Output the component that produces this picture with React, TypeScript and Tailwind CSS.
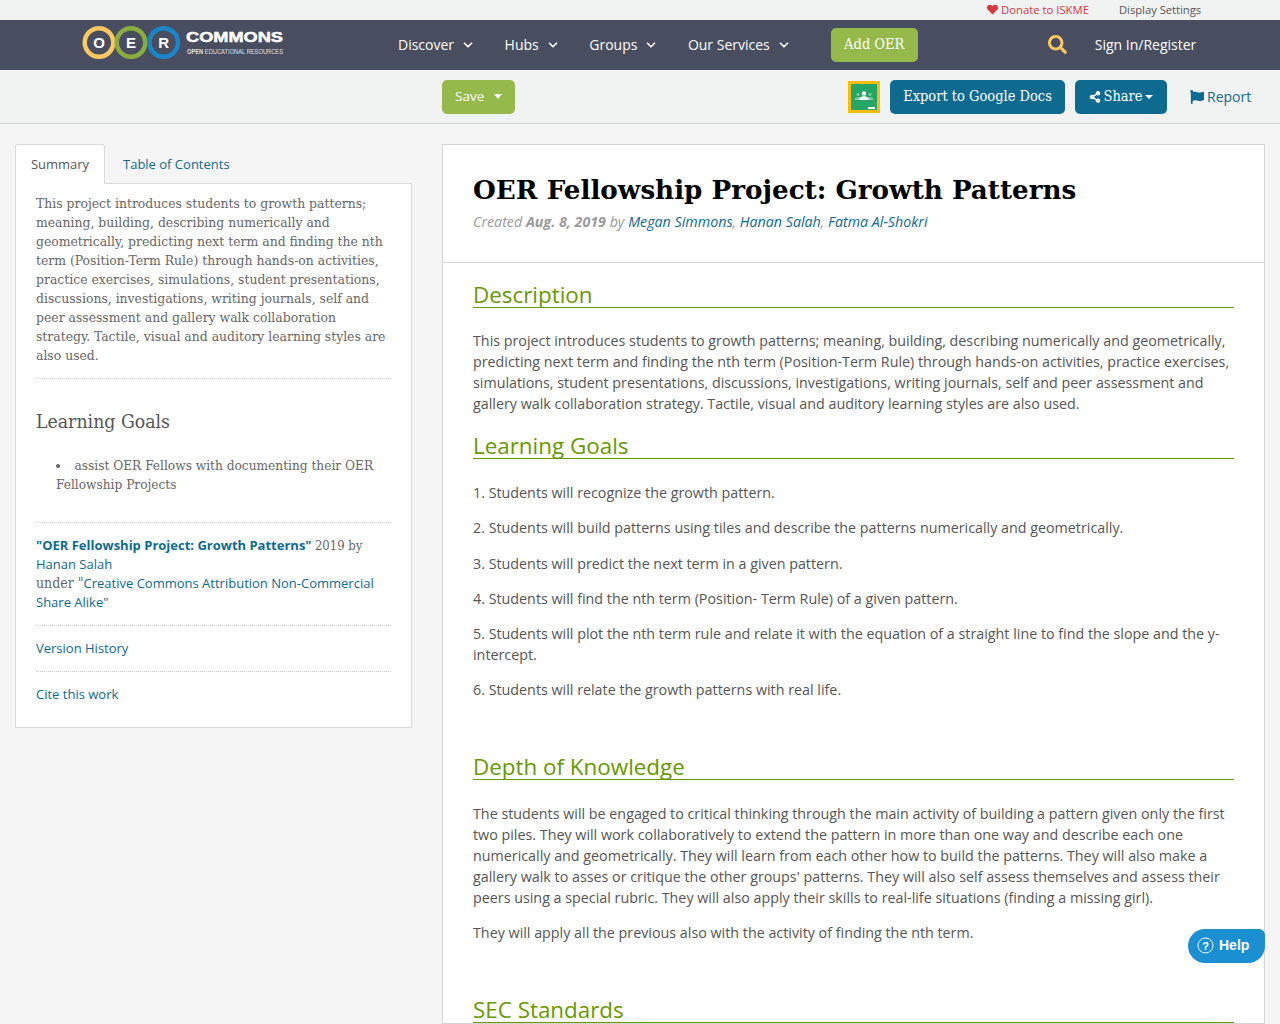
import { ChevronDown } from "lucide-react";
import { FaFlag, FaHeart, FaSearch, FaShareAlt } from "react-icons/fa";

const openSans = "font-['Open_Sans',sans-serif]";
const slab = "font-['DejaVu_Serif_Condensed','DejaVu_Serif',serif]";

const NavItem = ({ label }: { label: string }) => (
  <div className="flex items-center gap-[7px]">
    <span>{label}</span>
    <ChevronDown size={14} strokeWidth={3} />
  </div>
);

const SectionTitle = ({ children }: { children: string }) => (
  <h2 className="text-[22.4px] leading-[24px] text-[#669900] border-b border-[#669900] h-[25px]">
    {children}
  </h2>
);

const Logo = () => (
  <svg width="220" height="38" viewBox="0 0 220 38" className="block">
    <circle cx="18" cy="16.500" r="14.250" fill="#484e60" stroke="#fcc85f" strokeWidth="4.500" />
    <circle cx="50" cy="16.500" r="14.250" fill="#484e60" stroke="#8aad3e" strokeWidth="4.500" />
    <circle cx="82.700" cy="16.500" r="14.250" fill="#484e60" stroke="#1a85c8" strokeWidth="4.500" />
    <g fill="#fff" fontFamily="Liberation Sans" fontWeight="700" textAnchor="middle" fontSize="15">
      <text x="18" y="22">O</text>
      <text x="50" y="22">E</text>
      <text x="82.700" y="22">R</text>
    </g>
    <text x="105" y="16.300" fill="#fff" stroke="#fff" strokeWidth="0.500" fontFamily="Liberation Sans" fontWeight="700" fontSize="15.500" textLength="97" lengthAdjust="spacingAndGlyphs">COMMONS</text>
    <text x="106" y="27.500" fill="#dfe2e6" fontFamily="Liberation Sans" fontSize="6.500" textLength="96" lengthAdjust="spacingAndGlyphs">
      <tspan fontWeight="700">OPEN</tspan> EDUCATIONAL RESOURCES
    </text>
  </svg>
);

const ClassroomIcon = () => (
  <div className="w-8 h-8 border-[3px] border-[#fbbc05] bg-[#25a667] relative">
    <svg width="26" height="26" viewBox="0 0 26 26" className="block">
      <circle cx="7" cy="10.500" r="1.600" fill="#7fcba6" />
      <circle cx="19" cy="10.500" r="1.600" fill="#7fcba6" />
      <path d="M3.500 16c0-2 2-3 3.500-3s3.500 1 3.500 3zM15.500 16c0-2 2-3 3.500-3s3.500 1 3.500 3z" fill="#7fcba6" />
      <circle cx="13" cy="9.500" r="2.200" fill="#fff" />
      <path d="M8 16c0-2.600 2.800-3.800 5-3.800s5 1.200 5 3.800z" fill="#fff" />
      <rect x="17" y="23" width="7" height="2" fill="#fff" />
    </svg>
  </div>
);

const Divider = () => <div className="border-t border-dotted border-[#c9c9c9]" />;

export default function App() {
  return (
    <div className={`${openSans} h-[1024px] overflow-hidden bg-[#f5f5f5] text-[14.3px] leading-[21px] text-[#555] relative`}>
      {/* top strip */}
      <div className="h-5 bg-[#f1f3f2] flex items-center text-[11.3px] pl-[987px] pb-[1px]">
        <FaHeart size={11} color="#d9363e" className="mr-[3px]" />
        <span className="text-[#d9363e]">Donate to ISKME</span>
        <span className="ml-[30px] text-[11.2px] text-[#555]">Display Settings</span>
      </div>

      {/* main nav */}
      <div className="h-[50px] bg-[#484e60] text-white text-[14px] flex items-center pl-[81px] pb-[1px]">
        <Logo />
        <div className="flex items-center ml-[97px] gap-[29.5px]">
          <NavItem label="Discover" />
          <NavItem label="Hubs" />
          <NavItem label="Groups" />
          <NavItem label="Our Services" />
        </div>
        <div className={`${slab} ml-[40px] w-[87px] h-[34px] rounded-[5px] bg-[#95ba4b] flex items-center justify-center text-[14.5px]`}>
          Add OER
        </div>
        <FaSearch size={19} className="ml-[130px] text-[#fcc85f]" />
        <span className="ml-[28px]">Sign In/Register</span>
      </div>

      {/* toolbar */}
      <div className="h-[54px] bg-[#f1f3f2] border-b border-[#d4d4d4] flex items-center pl-[442px]">
        <div className="w-[73px] h-[34px] rounded-[5px] bg-[#95ba4b] text-white text-[13.5px] flex items-center pl-[13px]">
          Save
          <span className="ml-[10px] border-x-[4.5px] border-x-transparent border-t-[5px] border-t-white" />
        </div>
        <div className="ml-[333px]">
          <ClassroomIcon />
        </div>
        <div className={`${slab} ml-[10px] w-[175px] h-[34px] rounded-[5px] bg-[#0e6a8f] text-white text-[14.5px] flex items-center justify-center`}>
          Export to Google Docs
        </div>
        <div className={`${slab} ml-[10px] w-[92px] h-[34px] rounded-[5px] bg-[#0e6a8f] text-white text-[14.5px] flex items-center justify-center gap-[2px]`}>
          <FaShareAlt size={12} />
          Share
          <span className="border-x-[4px] border-x-transparent border-t-[4px] border-t-white" />
        </div>
        <div className="ml-[23px] flex items-center gap-[3px] text-[#0e6a8f] text-[14px]">
          <FaFlag size={14} />
          Report
        </div>
      </div>

      <div className="flex items-start pt-5 pl-[15px]">
        {/* sidebar */}
        <div className="w-[397px] shrink-0">
          <div className="flex text-[13px] h-[40px]">
            <div className="w-[90px] h-[40px] bg-white border border-[#d9d9d9] border-b-0 rounded-t-[3px] flex items-center justify-center text-[#555] relative z-10">
              Summary
            </div>
            <div className="ml-[18px] pt-[1px] flex items-center text-[#0e6a8f]">Table of Contents</div>
          </div>
          <div className="bg-white border border-[#d9d9d9] -mt-px px-5 pt-[10px] pb-[23px] text-[13px] leading-[19px]">
            <p className={`${slab} text-[#666] text-[13.8px] pb-[13px]`}>
              This project introduces students to growth patterns; meaning, building, describing numerically and geometrically, predicting next term and finding the nth term (Position-Term Rule) through hands-on activities, practice exercises, simulations, student presentations, discussions, investigations, writing journals, self and peer assessment and gallery walk collaboration strategy. Tactile, visual and auditory learning styles are also used.
            </p>
            <Divider />
            <h3 className={`${slab} text-[19.3px] leading-[24px] text-[#555] mt-[31px]`}>Learning Goals</h3>
            <ul className={`${slab} text-[#666] text-[13.55px] mt-[22px] pl-5 list-disc list-inside`}>
              <li>assist OER Fellows with documenting their OER Fellowship Projects</li>
            </ul>
            <div className="mt-[28px]">
              <Divider />
            </div>
            <p className="mt-[13px] text-[#666]">
              <a className="font-bold text-[#0e6a8f]">"OER Fellowship Project: Growth Patterns"</a>{" "}
              <span className={slab}>2019 by</span>
              <br />
              <a className="text-[#0e6a8f]">Hanan Salah</a>
              <br />
              <span className={`${slab} text-[14px]`}>under "</span>
              <a className="text-[#0e6a8f]">Creative Commons Attribution Non-Commercial</a>
              <br />
              <a className="text-[#0e6a8f]">Share Alike"</a>
            </p>
            <div className="mt-[13px]">
              <Divider />
            </div>
            <p className="mt-[13px] text-[#0e6a8f]">Version History</p>
            <div className="mt-[13px]">
              <Divider />
            </div>
            <p className="mt-[13px] text-[#0e6a8f]">Cite this work</p>
          </div>
        </div>

        {/* main */}
        <div className="ml-[30px] w-[823px] shrink-0 bg-white border border-[#d4d4d4]">
          <div className="h-[118px] border-b border-[#d4d4d4] px-[30px] pt-[26px]">
            <h1 className="font-['DejaVu_Serif',serif] font-bold text-[26.2px] leading-[38px] text-black">OER Fellowship Project: Growth Patterns</h1>
            <p className="italic text-[14.25px] text-[#9a9a9a] leading-[20px] mt-[3px]">
              Created <b>Aug. 8, 2019</b> by <a className="text-[#0e6a8f]">Megan Simmons</a>, <a className="text-[#0e6a8f]">Hanan Salah</a>, <a className="text-[#0e6a8f]">Fatma Al-Shokri</a>
            </p>
          </div>
          <div className="px-[30px] pt-[20px]">
            <SectionTitle>Description</SectionTitle>
            <p className="mt-[22px]">
              This project introduces students to growth patterns; meaning, building, describing numerically and geometrically, predicting next term and finding the nth term (Position-Term Rule) through hands-on activities, practice exercises, simulations, student presentations, discussions, investigations, writing journals, self and peer assessment and gallery walk collaboration strategy. Tactile, visual and auditory learning styles are also used.
            </p>
            <div className="mt-[20px]">
              <SectionTitle>Learning Goals</SectionTitle>
            </div>
            <div className="mt-[23px] flex flex-col gap-[14.3px]">
              <p>1. Students will recognize the growth pattern.</p>
              <p>2. Students will build patterns using tiles and describe the patterns numerically and geometrically.</p>
              <p>3. Students will predict the next term in a given pattern.</p>
              <p>4. Students will find the nth term (Position- Term Rule) of a given pattern.</p>
              <p>5. Students will plot the nth term rule and relate it with the equation of a straight line to find the slope and the y-intercept.</p>
              <p>6. Students will relate the growth patterns with real life.</p>
            </div>
            <div className="mt-[54.5px]">
              <SectionTitle>Depth of Knowledge</SectionTitle>
            </div>
            <p className="mt-[23px]">
              The students will be engaged to critical thinking through the main activity of building a pattern given only the first two piles. They will work collaboratively to extend the pattern in more than one way and describe each one numerically and geometrically. They will learn from each other how to build the patterns. They will also make a gallery walk to asses or critique the other groups' patterns. They will also self assess themselves and assess their peers using a special rubric. They will also apply their skills to real-life situations (finding a missing girl).
            </p>
            <p className="mt-[14.3px]">They will apply all the previous also with the activity of finding the nth term.</p>
            <div className="mt-[54.4px]">
              <SectionTitle>SEC Standards</SectionTitle>
            </div>
          </div>
        </div>
      </div>

      {/* help */}
      <div className="absolute left-[1188px] top-[929px] w-[77px] h-[34px] pb-[1px] rounded-l-[17px] rounded-tr-[6px] rounded-br-[17px] bg-[#1a8fd1] text-white flex items-center pl-[9px] gap-[5px] font-['Liberation_Sans',sans-serif] font-bold text-[14px]">
        <svg width="17" height="17" viewBox="0 0 17 17">
          <circle cx="8.500" cy="8.500" r="7.500" fill="none" stroke="#fff" strokeWidth="1" />
          <text x="8.500" y="12.500" textAnchor="middle" fill="#fff" fontSize="11" fontWeight="700" fontFamily="Liberation Sans">?</text>
        </svg>
        Help
      </div>
    </div>
  );
}
